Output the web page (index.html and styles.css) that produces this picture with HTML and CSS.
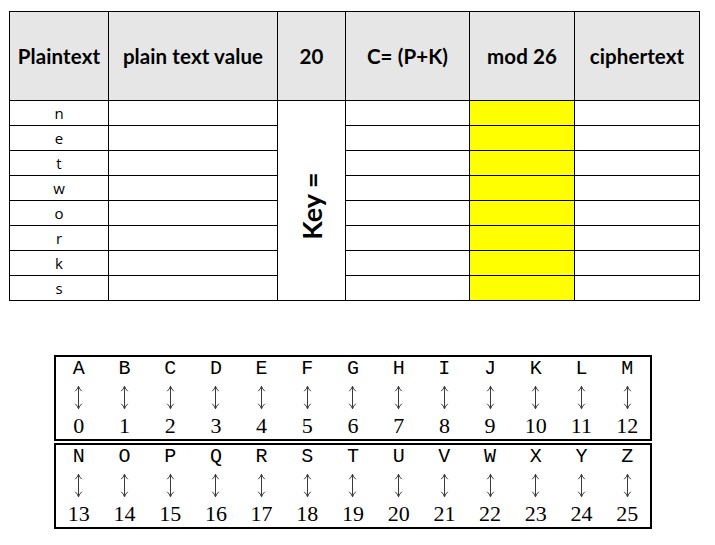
FILE: index.html
```html
<!DOCTYPE html>
<html lang="en">
<head>
<meta charset="utf-8">
<title>Vigenere / Caesar worksheet</title>
<link rel="stylesheet" href="styles.css">
</head>
<body>
<div class="page">
  <table class="cipher">
    <colgroup>
      <col class="c1"><col class="c2"><col class="c3"><col class="c4"><col class="c5"><col class="c6">
    </colgroup>
    <thead>
      <tr>
        <th>Plaintext</th>
        <th>plain text value</th>
        <th>20</th>
        <th>C= (P+K)</th>
        <th>mod 26</th>
        <th>ciphertext</th>
      </tr>
    </thead>
    <tbody>
      <tr><td class="pt">n</td><td></td><td class="key" rowspan="8"><span class="key-label">Key =</span></td><td></td><td class="mod"></td><td></td></tr>
      <tr><td class="pt">e</td><td></td><td></td><td class="mod"></td><td></td></tr>
      <tr><td class="pt">t</td><td></td><td></td><td class="mod"></td><td></td></tr>
      <tr><td class="pt">w</td><td></td><td></td><td class="mod"></td><td></td></tr>
      <tr><td class="pt">o</td><td></td><td></td><td class="mod"></td><td></td></tr>
      <tr><td class="pt">r</td><td></td><td></td><td class="mod"></td><td></td></tr>
      <tr><td class="pt">k</td><td></td><td></td><td class="mod"></td><td></td></tr>
      <tr><td class="pt">s</td><td></td><td></td><td class="mod"></td><td></td></tr>
    </tbody>
  </table>

  <div class="alpha">
    <div class="box" id="box1"></div>
    <div class="box" id="box2"></div>
  </div>
</div>
<script src="script.js"></script>
</body>
</html>
```

FILE: script.js
```js
(function () {
  var letters = "ABCDEFGHIJKLMNOPQRSTUVWXYZ";
  var arrow = '<svg class="arrow" viewBox="0 0 9 25" width="9" height="25" aria-hidden="true">' +
    '<path d="M4.5 1.2 V23.8 M1.2 6.2 Q3.6 4.2 4.5 1.2 Q5.4 4.2 7.8 6.2 M1.2 18.8 Q3.6 20.8 4.5 23.8 Q5.4 20.8 7.8 18.8" fill="none" stroke="#3a3a3a" stroke-width="1"/></svg>';
  function fill(id, start) {
    var box = document.getElementById(id);
    var html = "";
    for (var i = start; i < start + 13; i++) {
      html += '<div class="cell"><span class="letter">' + letters[i] + '</span>' + arrow +
        '<span class="num">' + i + '</span></div>';
    }
    box.innerHTML = html;
  }
  fill("box1", 0);
  fill("box2", 13);
})();
```

FILE: styles.css
```css
html, body {
  margin: 0;
  padding: 0;
  background: #ffffff;
}

.page {
  padding: 11px 0 0 9px;
}

.cipher {
  border-collapse: collapse;
  table-layout: fixed;
  width: 690px;
  font-family: Lato, "Open Sans", sans-serif;
  color: #000;
}

.cipher .c1 { width: 99px; }
.cipher .c2 { width: 169px; }
.cipher .c3 { width: 68px; }
.cipher .c4 { width: 124px; }
.cipher .c5 { width: 105px; }
.cipher .c6 { width: 125px; }

.cipher th,
.cipher td {
  border: 1px solid #000;
  padding: 0;
  text-align: center;
}

.cipher th {
  height: 88px;
  background: #e7e6e6;
  font-size: 20.5px;
  font-weight: 700;
  white-space: nowrap;
  letter-spacing: 0.1px;
}

.cipher td {
  height: 24px;
  font-family: "Open Sans", Lato, sans-serif;
  font-size: 15px;
  line-height: 16px;
}

.cipher td.mod {
  background: #ffff00;
}

.cipher td.key {
  background: #fff;
  font-family: Lato, "Open Sans", sans-serif;
}

.key-label {
  display: inline-block;
  transform: rotate(-90deg);
  font-size: 27px;
  font-weight: 700;
  white-space: nowrap;
  margin-top: 14px;
}

.alpha {
  margin: 54px 0 0 45px;
  display: flex;
  flex-direction: column;
  gap: 2px;
  width: 598px;
}

.box {
  border: 2px solid #000;
  display: grid;
  grid-template-columns: repeat(13, 1fr);
  padding: 3px 0 3px 0;
  box-sizing: border-box;
  height: 86px;
}

.cell {
  display: flex;
  flex-direction: column;
  align-items: center;
}

.letter {
  font-family: "Liberation Mono", "DejaVu Sans Mono", monospace;
  font-size: 20px;
  line-height: 18px;
  height: 18px;
  color: #000;
}

.arrow {
  display: block;
  margin-top: 7px;
}

.num {
  font-family: "Liberation Serif", "DejaVu Serif", serif;
  font-size: 22px;
  line-height: 20px;
  margin-top: 6px;
  color: #000;
}
```
